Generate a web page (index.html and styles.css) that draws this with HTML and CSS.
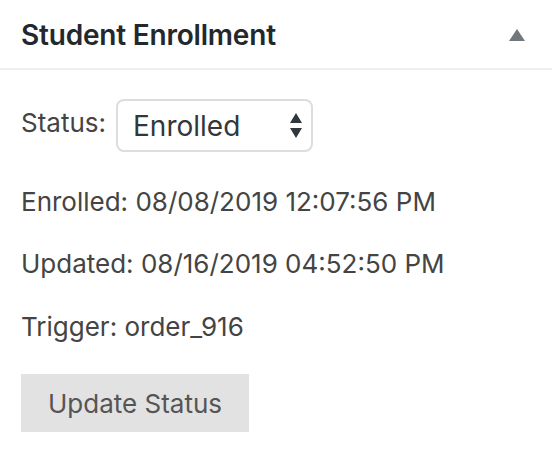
FILE: index.html
```html
<!DOCTYPE html>
<html lang="en">
<head>
<meta charset="utf-8">
<title>Student Enrollment</title>
<link rel="stylesheet" href="styles.css">
</head>
<body>
<div class="postbox">
  <div class="postbox-header">
    <h2 class="hndle">Student Enrollment</h2>
    <button class="toggle" type="button" aria-label="Toggle panel">
      <svg width="16" height="12" viewBox="0 0 16 12"><path d="M8 0 L16 12 L0 12 Z" fill="#72777c"/></svg>
    </button>
  </div>
  <div class="inside">
    <div class="status-row">
      <label class="status-label" for="status">Status:</label>
      <div class="select">
        <span class="select-value">Enrolled</span>
        <svg class="select-arrows" width="12" height="25" viewBox="0 0 12 25"><path d="M6 0 L12 10 L0 10 Z M0 15 L12 15 L6 25 Z" fill="#32373c"/></svg>
      </div>
    </div>
    <p class="meta meta-first">Enrolled: 08/08/2019 12:07:56 PM</p>
    <p class="meta">Updated: 08/16/2019 04:52:50 PM</p>
    <p class="meta">Trigger: order_916</p>
    <button class="update-btn" type="button">Update Status</button>
  </div>
</div>
</body>
</html>
```

FILE: styles.css
```css
html, body {
  margin: 0;
  padding: 0;
  background: #fff;
}

body {
  font-family: Inter, "Noto Sans", "Liberation Sans", sans-serif;
  color: #444;
}

.postbox {
  width: 552px;
}

.postbox-header {
  display: flex;
  align-items: center;
  justify-content: space-between;
  height: 68px;
  padding: 0 27px 0 21px;
  border-bottom: 2px solid #eeeeee;
}

.hndle {
  margin: 0;
  font-size: 28px;
  line-height: 34px;
  font-weight: 600;
  letter-spacing: -0.2px;
  color: #23282d;
  padding-top: 2px;
}

.toggle {
  border: 0;
  background: transparent;
  padding: 0;
  display: flex;
  margin-top: 2px;
}

.inside {
  padding: 29px 21px 0 21px;
  display: flex;
  flex-direction: column;
  align-items: flex-start;
}

.status-row {
  display: flex;
  align-items: center;
  gap: 10px;
}

.status-label {
  font-size: 26px;
  line-height: 36px;
  color: #444;
  margin-top: -6px;
}

.select {
  box-sizing: border-box;
  width: 197px;
  height: 53px;
  border: 2px solid #dddddd;
  border-radius: 8px;
  background: #fff;
  display: flex;
  align-items: center;
  justify-content: space-between;
  padding: 0 9px 0 15px;
}

.select-value {
  font-size: 28px;
  line-height: 36px;
  color: #32373c;
}

.meta {
  margin: 0;
  font-size: 26px;
  line-height: 36px;
  color: #444;
  margin-top: 26.5px;
}

.meta-first {
  margin-top: 31.5px;
}

.update-btn {
  margin-top: 29.5px;
  height: 58px;
  padding: 0 27px;
  border: 0;
  background: #e2e2e2;
  font-family: inherit;
  font-size: 26px;
  color: #555;
  cursor: pointer;
}
```
